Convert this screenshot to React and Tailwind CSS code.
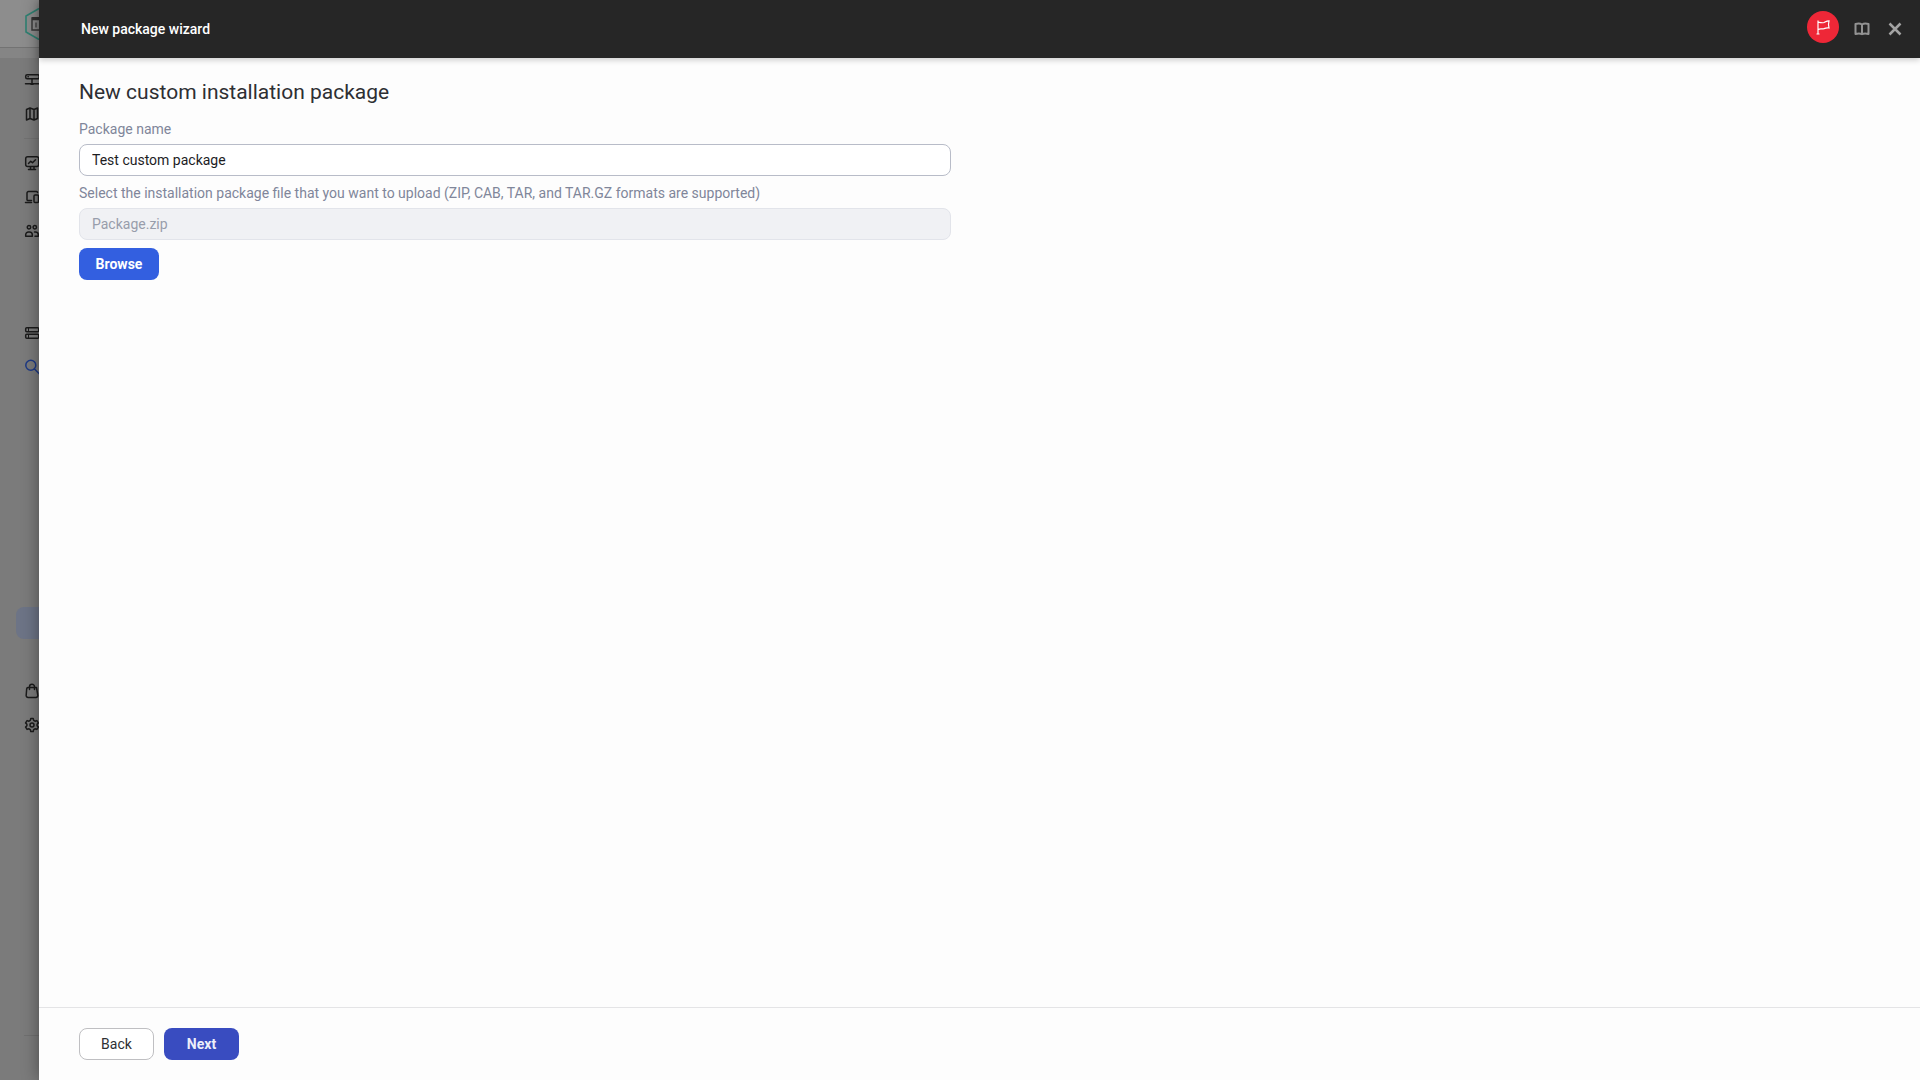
import React, { useState } from "react";

const Icon = ({ children, className = "text-[#1b1b1b]" }) => (
  <svg
    width="16"
    height="16"
    viewBox="0 0 16 16"
    fill="none"
    stroke="currentColor"
    strokeWidth="1.5"
    strokeLinecap="round"
    strokeLinejoin="round"
    className={`shrink-0 ${className}`}
    aria-hidden="true"
  >
    {children}
  </svg>
);

const NavItem = ({ label, children }) => (
  <a href="#" aria-label={label} className="flex h-[34px] shrink-0 items-center pl-6">
    {children}
  </a>
);

// Dimmed console menu that stays visible behind the wizard
const Sidebar = () => (
  <aside className="flex w-[39px] shrink-0 flex-col overflow-hidden bg-[#7b7b7b]">
    <div className="h-12 shrink-0 border-b border-[#737373] bg-[#8d8d8d] pt-2 pl-6">
      <svg width="30" height="32" viewBox="0 0 30 32" fill="none" className="max-w-none">
        <path d="M15 0.500L2 8v16l13 7.500L28 24V8z" stroke="#2f8172" strokeWidth="1.600" />
        <path d="M8 11.500h14M8 10v12h14V10z" stroke="#3a3a3a" strokeWidth="1.500" />
        <path d="M8 10.500h14" stroke="#333" strokeWidth="3" />
        <path d="M12 14.500v5" stroke="#4a4a4a" strokeWidth="1.500" />
      </svg>
    </div>
    <div className="h-[10px] shrink-0 bg-[#858585]" />
    <nav className="flex flex-1 flex-col pt-[5px]">
      <NavItem label="Server">
        <Icon>
          <rect x="1.700" y="2.700" width="13.500" height="4" rx="1.500" />
          <path d="M8 7v4M1.500 11.800h13M4 4.700h0.300" />
          <path d="M7 12.300h2" />
        </Icon>
      </NavItem>
      <NavItem label="Map">
        <Icon>
          <path d="M2.500 3.500l3.500-1.500 4 1.500 3.500-1.500v10.500L10 14l-4-1.500L2.500 14zM6 2.500v10M10 4v10" />
        </Icon>
      </NavItem>
      <div className="mt-[7px] mb-[7px] ml-6 h-px shrink-0 bg-[#727272]" />
      <NavItem label="Monitoring">
        <Icon>
          <rect x="1.700" y="1.800" width="13" height="9.700" rx="2" />
          <path d="M6.500 12v2.300M10 12v2.300M4.500 14.500h7M4.500 8.500l2.200-2.200 1.800 1.400L11.500 4.800" />
        </Icon>
      </NavItem>
      <NavItem label="Devices">
        <Icon>
          <path d="M3 11V4A1.500 1.500 0 0 1 4.500 2.500H12.500a1 1 0 0 1 1 1M1.500 13.500h6M3 11a1 1 0 0 0 1 0.500h3.500" />
          <rect x="10" y="6" width="4.500" height="7.500" rx="1" />
        </Icon>
      </NavItem>
      <NavItem label="Users">
        <Icon>
          <circle cx="5" cy="4.200" r="1.700" />
          <circle cx="10.800" cy="4.200" r="1.700" />
          <path d="M1.700 13.200v-1.400A2.800 2.800 0 0 1 4.500 9h1a2.800 2.800 0 0 1 2.800 2.800v1.400zM10.500 9h1a2.800 2.800 0 0 1 2.800 2.800v1.400H11" />
        </Icon>
      </NavItem>
      <div className="h-[68px] shrink-0" />
      <NavItem label="Storage">
        <Icon>
          <rect x="1.700" y="2.700" width="13" height="4" rx="1" />
          <rect x="1.700" y="9.200" width="13" height="4" rx="1" />
          <path d="M4.500 3v3.500M4.500 9.500V13" strokeWidth="1" />
        </Icon>
      </NavItem>
      <NavItem label="Discovery">
        <Icon className="text-[#1e3a86]">
          <circle cx="6.800" cy="6.300" r="5" />
          <path d="M10.500 10l5 5" />
        </Icon>
      </NavItem>
      <a
        href="#"
        aria-label="Installation packages"
        className="mt-[223px] ml-4 h-8 shrink-0 rounded-l-lg bg-[#6d7486]"
      />
      <div className="h-[35px] shrink-0" />
      <NavItem label="Marketplace">
        <Icon>
          <path d="M4 4.500h8.500L13.800 12a2 2 0 0 1-2 2.500h-7.600a2 2 0 0 1-2-2.500L2.700 5.800A1.500 1.500 0 0 1 4 4.500zM5.500 6.500V3.800a2.500 2.500 0 0 1 5 0v2.700" />
        </Icon>
      </NavItem>
      <NavItem label="Settings">
        <Icon>
          <path d="M6.800 1.500h2.400l0.500 1.900 1.300 0.800 1.900-0.600 1.500 2.300-1.300 1.300v1.600l1.300 1.300-1.500 2.300-1.900-0.600-1.300 0.800-0.500 1.900H6.800l-0.500-1.900-1.300-0.800-1.900 0.600-1.500-2.300 1.300-1.300V7.200L1.600 5.900l1.500-2.300 1.900 0.600 1.300-0.800z" />
          <circle cx="8" cy="8" r="2" />
        </Icon>
      </NavItem>
      <div className="mt-auto mb-11 ml-6 h-px shrink-0 bg-[#707070]" />
    </nav>
  </aside>
);

const WizardHeader = () => (
  <header className="relative flex h-[58px] shrink-0 items-center justify-between bg-[#262626] pr-[17px] pl-[42px] shadow-[0_2px_6px_rgba(0,0,0,0.2)]">
    <h1 className="text-sm font-medium text-white">New package wizard</h1>
    <div className="flex items-center">
      <button
        type="button"
        aria-label="Flag"
        className="mb-1 flex h-8 w-8 items-center justify-center rounded-full bg-[#ee2737] text-white"
      >
        <svg width="16" height="16" viewBox="0 0 16 16" fill="none" stroke="currentColor" strokeWidth="1.2">
          <path d="M3 1.500v13.500M1.500 15h3M3 3.500c2.500-0.500 3.500 0.800 6 0 1.500-0.700 2.500-1.700 5-1.700l-0.500 3.700 0.500 3.500c-2.500-0.500-3.500 0-5 0.700-2.500 0.800-3.500-0.500-6 1" />
        </svg>
      </button>
      <button type="button" aria-label="Help" className="ml-[15px]">
        <Icon className="text-[#939393]">
          <path
            strokeWidth="2"
            d="M8 3.500C6.500 2.500 3.500 2.500 1.500 3v10c2-0.600 5-0.600 6.500 0.200 1.500-0.800 4.500-0.800 6.500-0.200V3C12.500 2.500 9.500 2.500 8 3.500zM8 3.500v9.500"
          />
        </Icon>
      </button>
      <button type="button" aria-label="Close" className="ml-[17px] text-[#a3a3a3]">
        <svg width="16" height="16" viewBox="0 0 16 16" fill="none" stroke="currentColor" strokeWidth="2.500">
          <path d="M2.500 2.500l11 11M13.500 2.500l-11 11" />
        </svg>
      </button>
    </div>
  </header>
);

const App = () => {
  const [packageName, setPackageName] = useState("Test custom package");

  return (
    <div className="flex h-screen overflow-hidden font-['Roboto',sans-serif] text-sm">
      <Sidebar />
      <div
        role="dialog"
        aria-label="New package wizard"
        className="relative flex min-w-0 flex-1 flex-col bg-[#fdfdfd] shadow-[0_0_16px_rgba(0,0,0,0.4)]"
      >
        <WizardHeader />
        <form className="flex min-h-0 flex-1 flex-col" onSubmit={(e) => e.preventDefault()}>
          <div className="flex-1 overflow-auto px-10 pt-[18px]">
            <h2 className="text-[21px] leading-8 text-[#2e2f33]">New custom installation package</h2>
            <div className="mt-[9px] max-w-[872px]">
              <label htmlFor="packageName" className="block leading-6 text-[#80869a]">
                Package name
              </label>
              <input
                id="packageName"
                type="text"
                value={packageName}
                onChange={(e) => setPackageName(e.target.value)}
                className="mt-[3px] block h-8 w-full rounded-lg border border-[#b8bcc8] bg-white px-3 text-[#1d1d1f]"
              />
              <label htmlFor="packageFile" className="mt-[5px] block leading-6 text-[#80869a]">
                Select the installation package file that you want to upload (ZIP, CAB, TAR, and TAR.GZ formats are supported)
              </label>
              <input
                id="packageFile"
                type="text"
                value="Package.zip"
                disabled
                readOnly
                className="mt-[3px] block h-8 w-full rounded-lg border border-[#e2e4ea] bg-[#f0f1f4] px-3 text-[#989dab]"
              />
              <button
                type="button"
                className="mt-2 h-8 w-20 rounded-lg bg-[#335fe0] font-bold text-white"
              >
                Browse
              </button>
            </div>
          </div>
          <footer className="flex shrink-0 gap-[10px] border-t border-[#e4e4e6] px-10 py-5">
            <button
              type="button"
              className="h-8 w-[75px] rounded-lg border border-[#bfbfc2] bg-white text-[#2e2f33]"
            >
              Back
            </button>
            <button type="submit" className="h-8 w-[75px] rounded-lg bg-[#394cc0] font-bold text-[#eceefa]">
              Next
            </button>
          </footer>
        </form>
      </div>
    </div>
  );
};

export default App;
